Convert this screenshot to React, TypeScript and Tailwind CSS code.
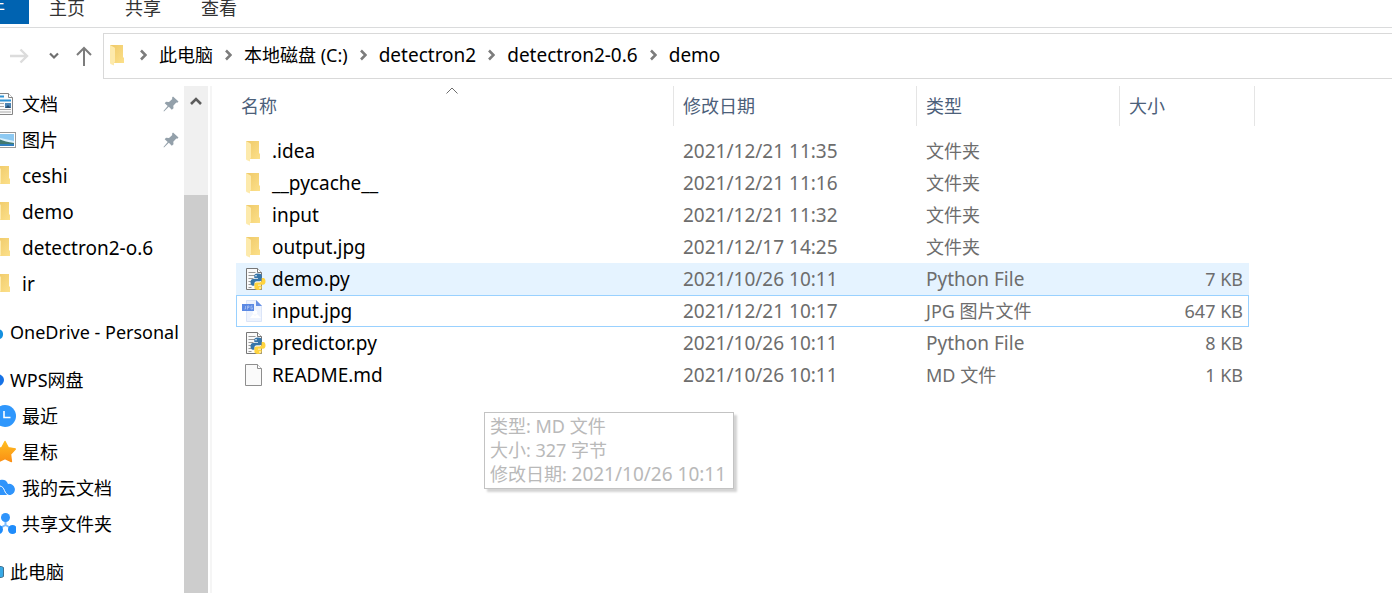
import React from "react";

type IconProps = { className?: string };

const FolderIcon = ({ className = "size-6 shrink-0" }: IconProps) => (
  <svg viewBox="0 0 24 24" className={className} aria-hidden="true">
    <defs>
      <linearGradient id="folderBack" x1="0" y1="0" x2="1" y2="1">
        <stop offset="0" stopColor="#efc968" />
        <stop offset="1" stopColor="#fce08a" />
      </linearGradient>
    </defs>
    <path d="M4 2h13v12l1 1v5H6z" fill="url(#folderBack)" />
    <path d="M4 2l4.500 2.600c.4.3.5.6.5 1V19l-1 1v2.600L4.500 21 4 20z" fill="#fdeaac" />
  </svg>
);

const PythonIcon = () => (
  <svg viewBox="0 0 24 24" className="size-6 shrink-0" aria-hidden="true">
    <path d="M4.500 1.500h11l4 4v17h-15z" fill="#fafafa" stroke="#777" />
    <path d="M15.500 1.500v4h4" fill="#fff" stroke="#777" />
    <path d="M6.500 5.500h7M6.500 8.500h10M6.500 11.500h5M6.500 14.500h3M6.500 17.500h3M6.500 20.500h3" stroke="#999" />
    <path
      d="M15.800 6.500c-2.900 0-3.500 1.100-3.500 2.400v2.300h3.700v.7h-5c-1.700 0-2.500 1.300-2.500 3.400s1 3.400 2.300 3.400h1.700v-2.300c0-1.300 1-2.200 2.200-2.200h3.200c1.100 0 1.900-.8 1.900-1.900V8.900c0-1.600-1.300-2.400-4-2.400z"
      fill="#3675a9"
    />
    <path
      d="M16.200 23c2.900 0 3.500-1.100 3.500-2.400v-2.200H16v-.7h5c1.700 0 2.500-1.200 2.500-3.200s-.8-3.400-2.100-3.400h-1.700v2.100c0 1.300-1 2.200-2.200 2.200h-3.200c-1.100 0-1.900.8-1.900 1.900v3.300c0 1.600 1.100 2.400 3.800 2.400z"
      fill="#ffd43f"
    />
    <circle cx="14" cy="8.700" r=".8" fill="#fff" />
    <circle cx="18" cy="21" r=".8" fill="#fff" />
  </svg>
);

const JpgIcon = () => (
  <svg viewBox="0 0 24 24" className="size-6 shrink-0" aria-hidden="true">
    <path d="M4.500 1.500h10l5 5v16h-15z" fill="#eef3fd" stroke="#dbe5f8" />
    <path d="M14 1l6 6h-6z" fill="#6690e4" />
    <path d="M8 19l3-4 2 2 2-2 4 4z" fill="#fff" />
    <circle cx="13" cy="13.500" r="2.300" fill="#fff" />
    <rect y="5" width="12" height="7" fill="#5b89e3" />
    <path d="M2.500 10h1V7M5.500 10.500V7h1.500v1.500H5.500M10.500 7H9v3h1.500V8.500" fill="none" stroke="#b5caf3" strokeWidth=".7" />
  </svg>
);

const BlankFileIcon = () => (
  <svg viewBox="0 0 24 24" className="size-6 shrink-0" aria-hidden="true">
    <path d="M3.500 1.500h12l4 4v17h-16z" fill="#fafafa" stroke="#8e8e8e" />
    <path d="M15.500 1.500v4h4" fill="#fff" stroke="#8e8e8e" />
  </svg>
);

const DocumentsIcon = () => (
  <svg viewBox="0 0 24 24" className="size-6 shrink-0" aria-hidden="true">
    <path d="M3.500 1.500h13l4 4v17h-17z" fill="#fbfbfb" stroke="#858585" />
    <path d="M16.500 1.500v4h4" fill="#fff" stroke="#858585" />
    <path d="M6 4.500h6M6 8.500h13" stroke="#2f93d4" strokeWidth="2" />
    <path d="M6 11.500h6M6 14.500h6M6 17.500h13M6 20h13" stroke="#aaa" />
    <rect x="13" y="11" width="6" height="5" fill="#4c86b6" />
    <path d="M13 16l3-3 3 3z" fill="#284f74" />
  </svg>
);

const PicturesIcon = () => (
  <svg viewBox="0 0 24 24" className="size-6 shrink-0" aria-hidden="true">
    <rect x=".5" y="4.500" width="23" height="15" fill="#fff" stroke="#999" />
    <rect x="2" y="6" width="20" height="12" fill="#8dc9f2" />
    <path d="M2 10c5-1 10 1 20 3v2H2z" fill="#d9effb" />
    <path d="M2 11c6-1 10 3 20 4v3H2z" fill="#41786f" />
    <path d="M2 16h20v2H2z" fill="#2f7fc0" />
  </svg>
);

const OneDriveIcon = () => (
  <svg viewBox="0 0 24 24" className="size-6 shrink-0" aria-hidden="true">
    <path d="M5 19a5 5 0 0 1 0-10 6 6 0 0 1 11-1 5 5 0 0 1 4 1.500 5.200 5.200 0 0 1 0 9.500z" fill="#1490df" />
  </svg>
);

const WpsDriveIcon = () => (
  <svg viewBox="0 0 24 24" className="size-6 shrink-0" aria-hidden="true">
    <path d="M6 18a5 5 0 0 1 0-10 6 6 0 0 1 9-1 6 6 0 0 1 9 5 6 6 0 0 1-6 6z" fill="#1672e6" />
  </svg>
);

const RecentIcon = () => (
  <svg viewBox="0 0 24 24" className="size-6 shrink-0" aria-hidden="true">
    <circle cx="13" cy="12" r="11" fill="#2f97fc" />
    <path d="M12 7v6.500h6.500" fill="none" stroke="#fff" strokeWidth="1.600" />
  </svg>
);

const StarIcon = () => (
  <svg viewBox="0 0 24 24" className="size-6 shrink-0" aria-hidden="true">
    <defs>
      <linearGradient id="star" x1="0" y1="0" x2="0" y2="1">
        <stop offset="0" stopColor="#ffbd20" />
        <stop offset="1" stopColor="#fb9015" />
      </linearGradient>
    </defs>
    <path
      d="M13 1.500l3.300 6.300 7 1.300-4.800 5.200.9 7.200-6.400-3-6.400 3 .9-7.200-4.800-5.200 7-1.300z"
      fill="url(#star)"
      stroke="url(#star)"
      strokeWidth="1.500"
      strokeLinejoin="round"
    />
  </svg>
);

const CloudDocsIcon = () => (
  <svg viewBox="0 0 24 24" className="size-6 shrink-0" aria-hidden="true">
    <path d="M5 19a5 5 0 0 1-1-10 6.200 6.200 0 0 1 12-1 5.600 5.600 0 1 1 2.500 11z" fill="#2f94fb" />
    <path d="M8 10c2.500.5 3.500 2 4.500 4.500s2 4 4 4.500" fill="none" stroke="#fff" />
  </svg>
);

const SharedIcon = () => (
  <svg viewBox="0 0 24 24" className="size-6 shrink-0" aria-hidden="true">
    <path d="M13.500 6v8M13.500 13l7 4M13.500 13l-7 4" stroke="#7dbcfd" strokeWidth="2" />
    <circle cx="13.500" cy="5.500" r="4.500" fill="#2f94fb" />
    <circle cx="20.500" cy="17.500" r="4.500" fill="#1f8cfb" />
    <circle cx="6.500" cy="17.500" r="4.500" fill="#1f8cfb" />
  </svg>
);

const ComputerIcon = () => (
  <svg viewBox="0 0 24 24" className="size-6 shrink-0" aria-hidden="true">
    <path d="M3.500 6.500h18l2 1v9l-2 1h-18z" fill="#37a9e6" stroke="#44708c" />
    <path d="M8 20h9" stroke="#5a7482" strokeWidth="2" />
  </svg>
);

const PinIcon = () => (
  <svg viewBox="0 0 16 16" className="size-4 shrink-0" aria-hidden="true">
    <path d="M10 .5l5.500 5-1.200 1.200-1-.2-3 3.200.2 2.500-1.700 1.500-3-3L1 15.500.5 15l4.200-5-3-2.800L3 5.700l3 .2L9.300 3 9 1.700z" fill="#93a0aa" />
  </svg>
);

const CrumbChevron = () => (
  <svg viewBox="0 0 7 12" className="h-3 w-[7px] shrink-0" aria-hidden="true">
    <path d="M1 1.500L5.500 6 1 10.500" fill="none" stroke="#7c7c7c" strokeWidth="2.600" />
  </svg>
);

const small = "text-lg";
const large = "text-[19px]";

type Place = {
  label: string;
  icon: React.ReactNode;
  size: string;
  top?: boolean;
  pinned?: boolean;
};

const places: Place[] = [
  { label: "文档", icon: <DocumentsIcon />, size: small, pinned: true },
  { label: "图片", icon: <PicturesIcon />, size: small, pinned: true },
  { label: "ceshi", icon: <FolderIcon />, size: large },
  { label: "demo", icon: <FolderIcon />, size: large },
  { label: "detectron2-o.6", icon: <FolderIcon />, size: large },
  { label: "ir", icon: <FolderIcon />, size: large },
  { label: "OneDrive - Personal", icon: <OneDriveIcon />, size: small, top: true },
  { label: "WPS网盘", icon: <WpsDriveIcon />, size: small, top: true },
  { label: "最近", icon: <RecentIcon />, size: small },
  { label: "星标", icon: <StarIcon />, size: small },
  { label: "我的云文档", icon: <CloudDocsIcon />, size: small },
  { label: "共享文件夹", icon: <SharedIcon />, size: small },
  { label: "此电脑", icon: <ComputerIcon />, size: small, top: true },
];

const crumbs = [
  { label: "此电脑", size: small },
  { label: "本地磁盘 (C:)", size: small },
  { label: "detectron2", size: large },
  { label: "detectron2-0.6", size: large },
  { label: "demo", size: large },
];

type Entry = {
  name: string;
  date: string;
  type: string;
  size: string;
  icon: React.ReactNode;
  state?: "hover" | "focus";
};

const entries: Entry[] = [
  { name: ".idea", date: "2021/12/21 11:35", type: "文件夹", size: "", icon: <FolderIcon /> },
  { name: "__pycache__", date: "2021/12/21 11:16", type: "文件夹", size: "", icon: <FolderIcon /> },
  { name: "input", date: "2021/12/21 11:32", type: "文件夹", size: "", icon: <FolderIcon /> },
  { name: "output.jpg", date: "2021/12/17 14:25", type: "文件夹", size: "", icon: <FolderIcon /> },
  { name: "demo.py", date: "2021/10/26 10:11", type: "Python File", size: "7 KB", icon: <PythonIcon />, state: "hover" },
  { name: "input.jpg", date: "2021/12/21 10:17", type: "JPG 图片文件", size: "647 KB", icon: <JpgIcon />, state: "focus" },
  { name: "predictor.py", date: "2021/10/26 10:11", type: "Python File", size: "8 KB", icon: <PythonIcon /> },
  { name: "README.md", date: "2021/10/26 10:11", type: "MD 文件", size: "1 KB", icon: <BlankFileIcon /> },
];

const cellState = {
  none: "border-y border-transparent",
  hover: "border-y border-[#e5f3ff] bg-[#e5f3ff]",
  focus: "border-y border-[#99d1ff]",
};

function Ribbon() {
  return (
    <nav aria-label="功能区" className="flex h-7 items-start overflow-hidden border-b border-[#dadbdc] text-lg leading-6 text-[#333]">
      <button className="-mt-1 flex h-7 w-[29px] shrink-0 justify-end bg-[#0063b1] pr-6 text-white">
        <span className="whitespace-nowrap">文件</span>
      </button>
      <div className="-mt-1 ml-5 flex gap-10">
        <button>主页</button>
        <button>共享</button>
        <button>查看</button>
      </div>
    </nav>
  );
}

function AddressBar() {
  return (
    <div className="flex items-center pt-[5px]">
      <div className="flex w-[103px] shrink-0 items-center pl-[9px]">
        <button aria-label="前进">
          <svg viewBox="0 0 20 16" className="h-4 w-5">
            <path d="M1 8h17M11.500 1.500L18 8l-6.500 6.500" fill="none" stroke="#dcdcdc" strokeWidth="2.400" />
          </svg>
        </button>
        <button aria-label="最近位置" className="ml-5">
          <svg viewBox="0 0 10 8" className="h-2 w-2.5">
            <path d="M1 1.500l4 4 4-4" fill="none" stroke="#6f6f6f" strokeWidth="2.200" />
          </svg>
        </button>
        <button aria-label="向上" className="ml-[17px]">
          <svg viewBox="0 0 16 20" className="h-5 w-4">
            <path d="M8 20V2M1 9l7-7 7 7" fill="none" stroke="#7c7c7c" strokeWidth="2" />
          </svg>
        </button>
      </div>
      <div className="flex h-[46px] min-w-0 flex-1 items-center gap-3 overflow-hidden border-y border-l border-[#d9d9d9] pb-0.5 pl-0.5 text-black">
        <FolderIcon className="-mr-0.5 size-6 shrink-0" />
        {crumbs.map((c) => (
          <React.Fragment key={c.label}>
            <CrumbChevron />
            <button className={`${c.size} leading-6 whitespace-nowrap`}>{c.label}</button>
          </React.Fragment>
        ))}
      </div>
    </div>
  );
}

function Sidebar() {
  return (
    <aside className="flex w-[212px] shrink-0 border-r-2 border-[#f5f5f5]">
      <ul className="min-w-0 flex-1 overflow-hidden">
        {places.map((p) => (
          <li key={p.label} className={p.top ? "mt-3" : ""}>
            <a
              href="#"
              className={`flex h-9 items-center gap-1.5 leading-6 whitespace-nowrap text-black ${p.size} ${p.top ? "-ml-5" : "-ml-2"}`}
            >
              {p.icon}
              <span>{p.label}</span>
              {p.pinned && (
                <span className="mr-[5px] ml-auto">
                  <PinIcon />
                </span>
              )}
            </a>
          </li>
        ))}
      </ul>
      <div className="mr-0.5 flex w-6 shrink-0 flex-col bg-[#f0f0f0]">
        <button aria-label="向上滚动" className="flex h-[30px] items-center justify-center">
          <svg viewBox="0 0 12 10" className="h-2.5 w-3">
            <path d="M1 8l5-5 5 5" fill="none" stroke="#5c5c5c" strokeWidth="2.600" />
          </svg>
        </button>
        <div className="mt-[79px] flex-1 bg-[#cdcdcd]" />
      </div>
    </aside>
  );
}

function FileTable() {
  return (
    <table className="w-full table-fixed border-separate border-spacing-0 text-left text-[#6d6d6d]">
      <colgroup>
        <col className="w-[437px]" />
        <col className="w-[243px]" />
        <col className="w-[203px]" />
        <col className="w-[130px]" />
        <col />
      </colgroup>
      <thead className="text-lg leading-6 text-[#4c607a]">
        <tr>
          <th className="p-0 pr-[5px] pb-[9px] font-normal" aria-sort="ascending">
            <button className="relative flex h-10 w-full items-center pl-[5px]">
              名称
              <svg viewBox="0 0 12 8" className="absolute top-px left-1/2 h-2 w-3 -translate-x-1/2" aria-hidden="true">
                <path d="M.5 6.500L6 1l5.500 5.500" fill="none" stroke="#6d6d6d" />
              </svg>
            </button>
          </th>
          {["修改日期", "类型", "大小"].map((h) => (
            <th key={h} className="p-0 pb-[9px] font-normal">
              <button className="flex h-10 w-full items-center border-l border-[#e5e5e5] pl-[9px]">{h}</button>
            </th>
          ))}
          <td className="p-0 pb-[9px] pl-[5px]">
            <div className="h-10 border-l border-[#e5e5e5]" />
          </td>
        </tr>
      </thead>
      <tbody>
        {entries.map((e) => {
          const s = cellState[e.state ?? "none"];
          const focus = e.state === "focus";
          return (
            <tr key={e.name} className="h-8">
              <td className={`p-0 ${s} ${focus ? "border-l pl-[5px]" : "pl-1.5"}`}>
                <div className="flex items-center gap-1.5 text-[19px] leading-[30px] text-black">
                  {e.icon}
                  <span>{e.name}</span>
                </div>
              </td>
              <td className={`p-0 pl-2.5 text-[19px] leading-[30px] ${s}`}>{e.date}</td>
              <td className={`p-0 pl-2.5 leading-[30px] ${e.type === "Python File" ? "text-[19px]" : "text-lg"} ${s}`}>{e.type}</td>
              <td className={`p-0 text-right text-lg leading-[30px] ${s} ${focus ? "border-r pr-[5px]" : "pr-1.5"}`}>{e.size}</td>
              <td className="p-0" />
            </tr>
          );
        })}
      </tbody>
    </table>
  );
}

export default function App() {
  return (
    <div className="flex min-h-screen flex-col overflow-hidden bg-white font-['Noto_Sans','Noto_Sans_CJK_SC',sans-serif]">
      <Ribbon />
      <AddressBar />
      <div className="mt-[7px] flex flex-1">
        <Sidebar />
        <main className="relative min-w-0 flex-1 pl-6">
          <FileTable />
          <div
            role="tooltip"
            className="absolute top-[326px] left-[272px] border border-[#c3c3c3] bg-white pt-px pr-[7px] pb-0.5 pl-[5px] text-lg leading-6 whitespace-nowrap text-[#b9b9b9] shadow-[3px_3px_2px_#d4d4d4]"
          >
            <div>类型: MD 文件</div>
            <div>大小: 327 字节</div>
            <div>
              修改日期: <span className="text-[19px]">2021/10/26 10:11</span>
            </div>
          </div>
        </main>
      </div>
    </div>
  );
}
